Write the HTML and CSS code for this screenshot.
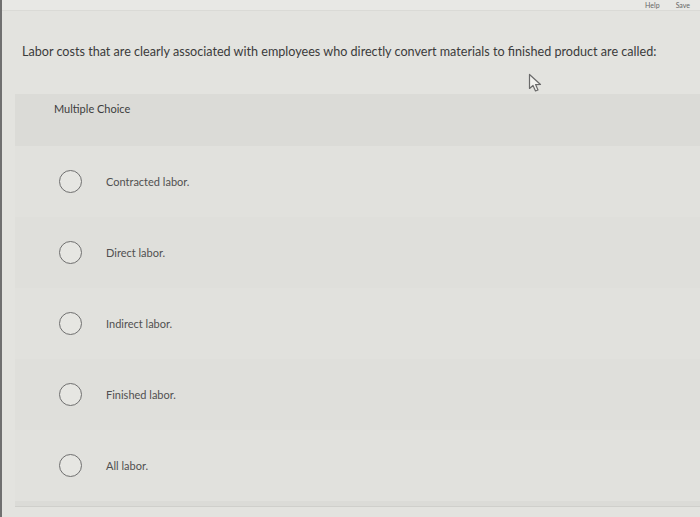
FILE: index.html
```html
<!DOCTYPE html>
<html lang="en">
<head>
  <meta charset="UTF-8">
  <meta name="viewport" content="width=device-width, initial-scale=1.0">
  <title>Multiple Choice</title>
  <link rel="stylesheet" href="styles.css">
</head>
<body>

  <div class="topbar">
    <span>Help</span>
    <span>Save</span>
  </div>

  <div class="page">
    <p class="question">Labor costs that are clearly associated with employees who directly convert materials to finished product are called:</p>

    <div class="cursor-row">
      <svg class="cursor" width="16" height="20" viewBox="0 0 16 20">
        <path d="M1.5 1.5 L1.5 15.5 L5 12.5 L7.5 18 L10 17 L7.6 11.6 L12.5 11.5 Z" fill="#f2f2ef" stroke="#6a6a6a" stroke-width="1.2" stroke-linejoin="round"/>
      </svg>
    </div>

    <div class="panel">
      <div class="panel-title">Multiple Choice</div>

      <div class="options">
        <label class="option">
          <span class="radio"></span>
          <span class="option-text">Contracted labor.</span>
        </label>
        <label class="option band">
          <span class="radio"></span>
          <span class="option-text">Direct labor.</span>
        </label>
        <label class="option">
          <span class="radio"></span>
          <span class="option-text">Indirect labor.</span>
        </label>
        <label class="option band">
          <span class="radio"></span>
          <span class="option-text">Finished labor.</span>
        </label>
        <label class="option">
          <span class="radio"></span>
          <span class="option-text">All labor.</span>
        </label>
      </div>
    </div>
  </div>

</body>
</html>
```

FILE: styles.css
```css
body {
  font-family: Lato, "Open Sans", sans-serif;
  background-color: #e3e3df;
  margin: 0;
  padding: 0;
  color: #3a3a3a;
  border-left: 2px solid #707070;
  height: 517px;
  box-sizing: border-box;
  overflow: hidden;
}

.topbar {
  height: 10px;
  display: flex;
  justify-content: flex-end;
  align-items: center;
  gap: 16px;
  padding-right: 10px;
  background-color: #e8e8e5;
  border-bottom: 1px solid #dadad6;
}

.topbar span {
  font-size: 7px;
  line-height: 8px;
  color: #666;
}

.page {
  padding-left: 13px;
}

.question {
  margin: 33px 0 0 7px;
  font-size: 12.6px;
  color: #3b3b3b;
  white-space: nowrap;
}

.cursor-row {
  height: 35px;
  padding-left: 513px;
  padding-top: 14px;
  box-sizing: border-box;
}

.panel {
  background-color: #dbdbd7;
  padding-top: 8px;
  height: 404px;
  border-bottom: 1px solid #cfcfcb;
}

.panel-title {
  font-size: 11px;
  color: #3d3d3d;
  padding-left: 39px;
}

.options {
  margin-top: 31px;
  display: flex;
  flex-direction: column;
}

.option {
  display: flex;
  align-items: center;
  height: 71px;
  padding-left: 44px;
  box-sizing: border-box;
  background-color: #e1e1dd;
}

.option.band {
  background-color: #dfdfdb;
}

.radio {
  width: 21px;
  height: 21px;
  border: 1.3px solid #6f6f6f;
  border-radius: 50%;
  background-color: #e6e6e2;
  flex-shrink: 0;
}

.option-text {
  margin-left: 24px;
  font-size: 11px;
  color: #505050;
}
```
